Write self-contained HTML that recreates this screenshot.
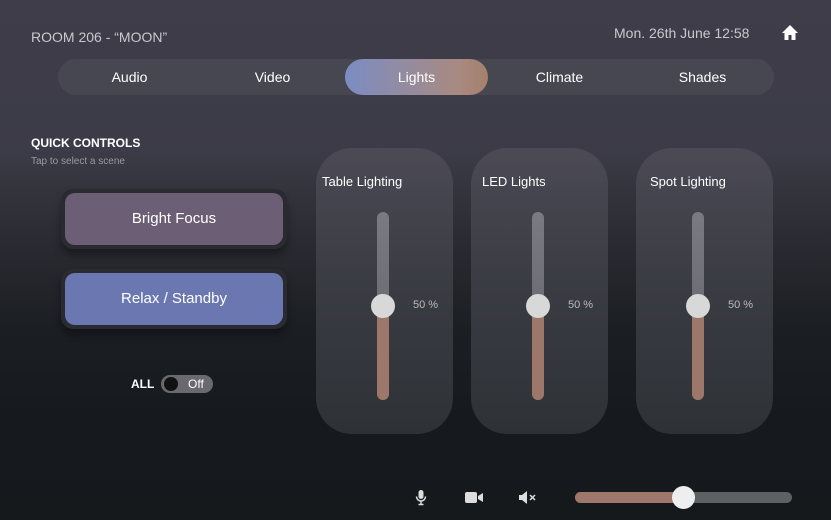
<!DOCTYPE html>
<html><head><style>
*{margin:0;padding:0;box-sizing:border-box}
body{width:831px;height:520px;overflow:hidden;font-family:"Liberation Sans",sans-serif;color:#fff;position:relative;
background:linear-gradient(180deg,#3e3d49 0px,#3c3b47 150px,#2c2d34 230px,#1b1e23 330px,#161a1e 420px,#15191c 520px)}
.a{position:absolute}
.nav{left:58px;top:59px;width:716px;height:36px;border-radius:18px;background:#474751}
.tab{position:absolute;top:0;height:36px;line-height:36px;font-size:14px;text-align:center;width:143px}
.sel{left:287px;width:143px;border-radius:18px;background:linear-gradient(90deg,#7b8dc4,#a98a80 80%,#a4806c)}
.panel{top:148px;width:137px;height:286px;border-radius:36px;background:linear-gradient(180deg,#4b4a55,#3b3c44 45%,#2e3236)}
.panel .t{position:absolute;left:6px;top:26px;font-size:13px}
.track{position:absolute;left:61px;top:64px;width:12px;height:188px;border-radius:6px;background:linear-gradient(#7a7b82,#5f6066);overflow:hidden}
.track div{position:absolute;left:0;bottom:0;width:12px;height:94px;background:#9d776a}
.knob{position:absolute;left:55px;top:146px;width:24px;height:24px;border-radius:50%;background:#d9d8d8}
.pct{position:absolute;left:97px;top:151px;font-size:11px;color:#bbb}
.btnw{position:absolute;left:61px;width:226px;height:60px;border-radius:12px;background:#2a2b31;box-shadow:0 6px 8px rgba(0,0,0,.35)}
.btn{position:absolute;left:4px;top:4px;width:218px;height:52px;border-radius:10px;font-size:15px;text-align:center;line-height:52px}
</style></head><body>
<div class="a" style="left:31px;top:29px;font-size:14px;color:#c8c8cc">ROOM 206 - “MOON”</div>
<div class="a" style="left:614px;top:25px;font-size:14px;color:#c8c8cc">Mon. 26th June 12:58</div>
<svg class="a" style="left:781px;top:24px" width="18" height="17" viewBox="0 0 18 17"><path d="M9 1L1 9h2.5v7h4v-5h3v5h4V9H17z" fill="#fff"/></svg>
<div class="a nav">
<div class="tab" style="left:0">Audio</div>
<div class="tab" style="left:143px">Video</div>
<div class="tab sel">Lights</div>
<div class="tab" style="left:430px">Climate</div>
<div class="tab" style="left:573px">Shades</div>
</div>
<div class="a" style="left:31px;top:136px;font-size:12px;font-weight:bold">QUICK CONTROLS</div>
<div class="a" style="left:31px;top:156px;font-size:10px;color:#9a9aa0">Tap to select a scene</div>
<div class="btnw" style="top:189px"><div class="btn" style="background:#6c5f75">Bright Focus</div></div>
<div class="btnw" style="top:269px"><div class="btn" style="background:#6b77b0">Relax / Standby</div></div>
<div class="a" style="left:131px;top:377px;font-size:12px;font-weight:bold">ALL</div>
<div class="a" style="left:161px;top:375px;width:52px;height:18px;border-radius:9px;background:#6a6a6e">
<div class="a" style="left:3px;top:2px;width:14px;height:14px;border-radius:50%;background:#111"></div>
<div class="a" style="left:27px;top:2px;font-size:12px">Off</div></div>
<div class="a panel" style="left:316px"><div class="t">Table Lighting</div><div class="track"><div></div></div><div class="knob"></div><div class="pct">50 %</div></div>
<div class="a panel" style="left:471px"><div class="t" style="left:11px">LED Lights</div><div class="track" style="left:61px"><div></div></div><div class="knob"></div><div class="pct">50 %</div></div>
<div class="a panel" style="left:636px"><div class="t" style="left:14px">Spot Lighting</div><div class="track" style="left:56px"><div></div></div><div class="knob" style="left:50px"></div><div class="pct" style="left:92px">50 %</div></div>
<svg class="a" style="left:415px;top:489px" width="12" height="17" viewBox="0 0 12 17"><rect x="3.5" y="1" width="5" height="9" rx="2.5" fill="#ddd"/><path d="M1.5 7.5a4.5 4.5 0 0 0 9 0M6 12v3M3.5 15.5h5" stroke="#ddd" stroke-width="1.5" fill="none"/></svg>
<svg class="a" style="left:465px;top:491px" width="19" height="13" viewBox="0 0 19 13"><rect x="0" y="1" width="12" height="11" rx="2" fill="#ddd"/><path d="M13 5l5-3v9l-5-3z" fill="#ddd"/></svg>
<svg class="a" style="left:518px;top:490px" width="19" height="15" viewBox="0 0 19 15"><path d="M1 5h3l5-4v13l-5-4H1z" fill="#ddd"/><path d="M12 5l5 5M17 5l-5 5" stroke="#ddd" stroke-width="1.5"/></svg>
<div class="a" style="left:575px;top:492px;width:217px;height:11px;border-radius:6px;background:#5d6163;overflow:hidden"><div style="width:110px;height:11px;background:#9d776a"></div></div>
<div class="a" style="left:672px;top:486px;width:23px;height:23px;border-radius:50%;background:#eee"></div>
</body></html>
